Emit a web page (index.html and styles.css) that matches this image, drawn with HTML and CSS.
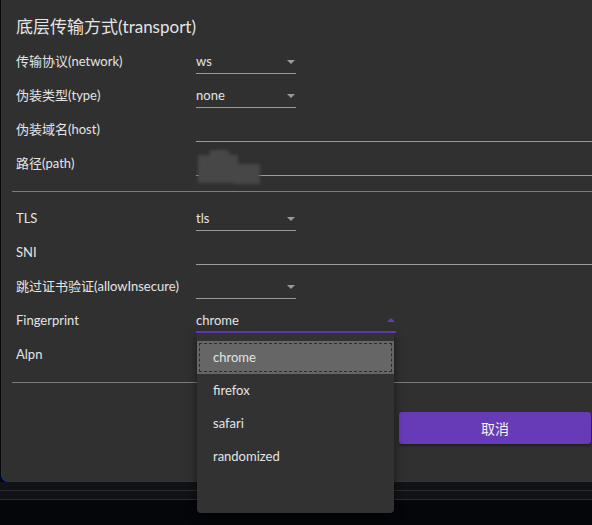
FILE: index.html
```html
<!DOCTYPE html>
<html lang="zh-CN">
<head>
<meta charset="UTF-8">
<title>transport</title>
<link rel="stylesheet" href="styles.css">
</head>
<body>
  <div class="window">
    <div class="title">底层传输方式(transport)</div>

    <div class="row">
      <div class="label">传输协议(network)</div>
      <div class="field select"><span>ws</span><i class="arrow"></i></div>
    </div>
    <div class="row">
      <div class="label">伪装类型(type)</div>
      <div class="field select"><span>none</span><i class="arrow"></i></div>
    </div>
    <div class="row">
      <div class="label">伪装域名(host)</div>
      <div class="field text"></div>
    </div>
    <div class="row">
      <div class="label">路径(path)</div>
      <div class="field text">
        <div class="mosaic">
          <b class="m1"></b><b class="m2"></b><b class="m3"></b><b class="m4"></b>
        </div>
      </div>
    </div>

    <div class="divider"></div>

    <div class="row">
      <div class="label">TLS</div>
      <div class="field select"><span>tls</span><i class="arrow"></i></div>
    </div>
    <div class="row">
      <div class="label">SNI</div>
      <div class="field text"></div>
    </div>
    <div class="row">
      <div class="label">跳过证书验证(allowInsecure)</div>
      <div class="field select"><span></span><i class="arrow"></i></div>
    </div>
    <div class="row">
      <div class="label">Fingerprint</div>
      <div class="field select wide focused"><span>chrome</span><i class="arrow up"></i>
        <ul class="menu">
          <li class="active">chrome</li>
          <li>firefox</li>
          <li>safari</li>
          <li>randomized</li>
        </ul>
      </div>
    </div>
    <div class="row">
      <div class="label">Alpn</div>
      <div class="field plain"></div>
    </div>

    <div class="divider"></div>

    <div class="actions">
      <button class="btn">取消</button>
    </div>
  </div>
  <div class="taskbar">
    <div class="strip"></div>
    <div class="strip"></div>
  </div>
</body>
</html>
```

FILE: styles.css
```css
body {
  margin: 0;
  width: 592px;
  height: 525px;
  overflow: hidden;
  background: #05060a;
  font-family: Lato, "Noto Sans CJK SC", sans-serif;
  color: #e4e4e4;
}
.window {
  position: relative;
  height: 466px;
  margin-left: 1px;
  padding-top: 15px;
  padding-left: 14px;
  background-color: #303030;
  border-left: 1px solid #0c35a8;
  border-bottom: 1px solid #0c35a8;
  border-bottom-left-radius: 7px;
}
.title {
  height: 24px;
  line-height: 24px;
  font-size: 17px;
  margin-bottom: 6px;
}
.row {
  display: flex;
  height: 34px;
  font-size: 13px;
}
.label {
  width: 180px;
  flex: none;
  line-height: 33px;
}
.field {
  position: relative;
  flex: 1;
  height: 28px;
  line-height: 33px;
  border-bottom: 1px solid #9a9a9a;
}
.field.select {
  flex: none;
  width: 100px;
}
.field.wide {
  width: 200px;
}
.field.focused {
  border-bottom: 2px solid #673ab7;
  height: 27px;
}
.field.plain {
  border-bottom: none;
}
.arrow {
  position: absolute;
  right: 1px;
  top: 15px;
  width: 0;
  height: 0;
  border-left: 4px solid transparent;
  border-right: 4px solid transparent;
  border-top: 4px solid #9a9a9a;
}
.arrow.up {
  top: 14px;
  border-top: none;
  border-bottom: 4px solid #673ab7;
}
.mosaic {
  position: absolute;
  left: 0;
  top: 1px;
  width: 64px;
  height: 37px;
  filter: blur(1.5px);
}
.mosaic b {
  position: absolute;
  background: #474747;
}
.m1 { left: 2px; top: 7px; width: 40px; height: 28px; }
.m2 { left: 14px; top: 2px; width: 18px; height: 10px; }
.m3 { left: 38px; top: 16px; width: 26px; height: 20px; background: #3f3f3f; }
.m4 { left: 24px; top: 4px; width: 10px; height: 8px; }
.divider {
  height: 1px;
  margin: 10px 0 10px -4px;
  background: #7c7c7c;
}
.menu {
  position: absolute;
  left: 1px;
  top: 29px;
  width: 197px;
  height: 172px;
  margin: 0;
  padding: 8px 0 0;
  list-style: none;
  background: #323232;
  border-radius: 0 0 4px 4px;
  box-shadow: 0 4px 10px rgba(0, 0, 0, 0.55);
  z-index: 5;
}
.menu li {
  height: 33px;
  line-height: 32px;
  padding-left: 16px;
  font-size: 13px;
}
.menu li.active {
  background: #666;
  outline: 1px dashed #2c2c2c;
  outline-offset: -3px;
}
.actions {
  display: flex;
  justify-content: flex-end;
  padding-top: 19px;
}
.btn {
  width: 192px;
  height: 32px;
  margin-right: 1px;
  background-color: #673ab7;
  color: #f2f2f2;
  border: none;
  border-radius: 3px;
  font-family: inherit;
  font-size: 14px;
  box-shadow: 0 2px 3px rgba(0, 0, 0, 0.35);
}
.taskbar {
  height: 18px;
  background: #101215;
}
.strip {
  height: 8px;
  border-bottom: 1px solid #2a2c2f;
}
```
